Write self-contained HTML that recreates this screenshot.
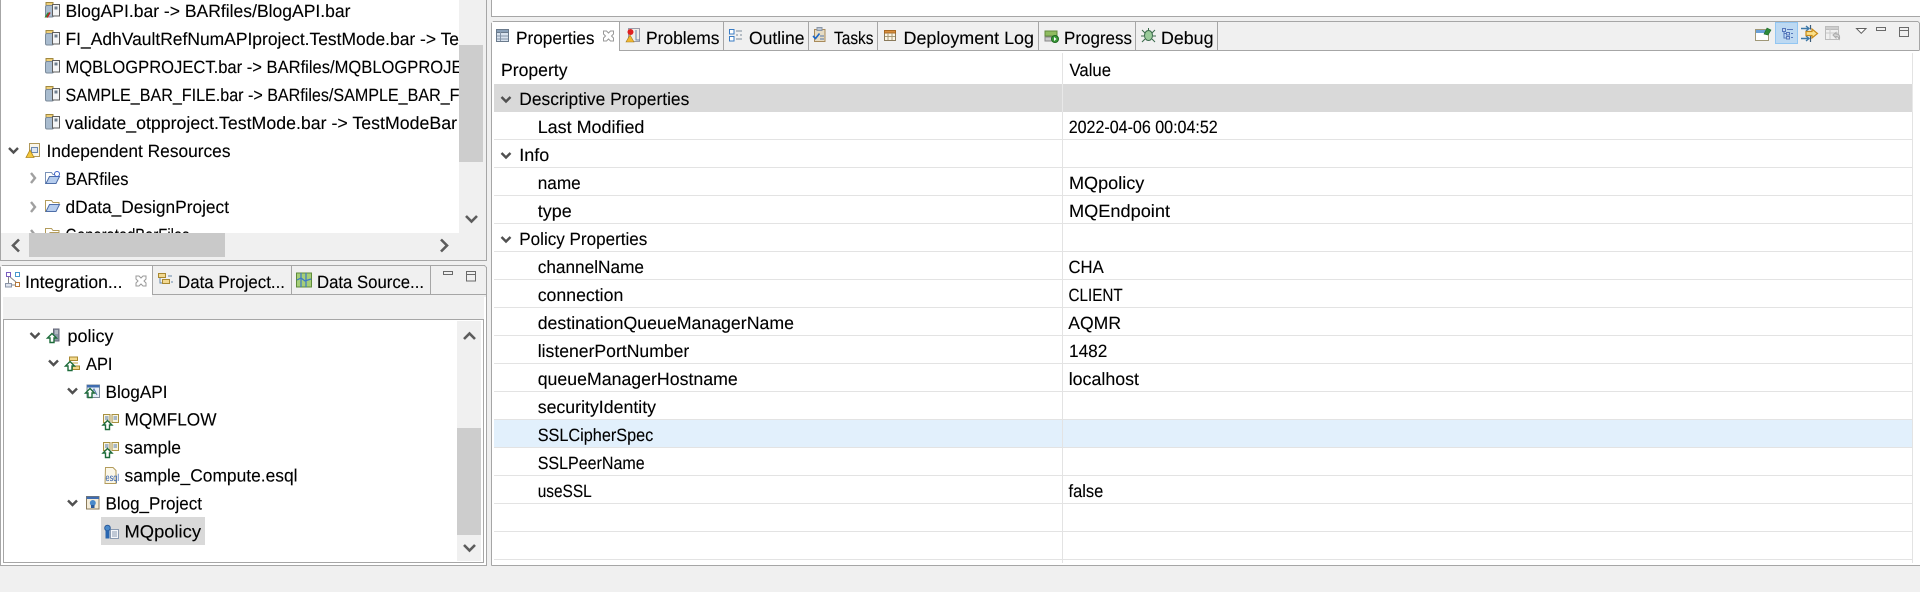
<!DOCTYPE html>
<html lang="en">
<head>
<meta charset="utf-8">
<title>Properties</title>
<style>
html,body{margin:0;padding:0;background:#f0f0f0;width:1920px;height:592px;overflow:hidden}
svg{display:block}
text{font-family:"Liberation Sans",sans-serif;font-size:17.8px;fill:#000;stroke:#000;stroke-width:.12;text-rendering:geometricPrecision}
.l{stroke:#e3e3e3;stroke-width:1;shape-rendering:crispEdges}
.b{stroke:#a6a6a6;stroke-width:1;fill:none;shape-rendering:crispEdges}
.cv{fill:none;stroke:#505050;stroke-width:2.4}
.cg{fill:none;stroke:#a0a0a0;stroke-width:2.4}
.sb{fill:none;stroke:#5c5c5c;stroke-width:2.6}
</style>
</head>
<body>
<svg width="1920" height="592" viewBox="0 0 1920 592" xmlns="http://www.w3.org/2000/svg">
<defs>
<clipPath id="c1"><rect x="0" y="0" width="459" height="233"/></clipPath>
<g id="bar">
<rect x="1" y="0.500" width="7" height="3" fill="#efcf78" stroke="#a08840"/>
<rect x="0.500" y="3.500" width="8" height="11.500" rx="1.500" fill="#a9bccf" stroke="#7a8a9a"/>
<rect x="7.500" y="2.500" width="7" height="11.500" fill="#f4f5f6" stroke="#5e5e5e"/>
<rect x="9.500" y="4.500" width="3" height="3" fill="#6f7f8f"/>
</g>
<g id="arrow">
<path d="M4.500 0.500 L9 5 L6.500 5 L6.500 9.500 L2.500 9.500 L2.500 5 L0 5 Z" fill="#fff" stroke="#1d6b3a" stroke-width="1.400"/>
</g>
<g id="msg">
<rect x="0.500" y="0.500" width="6.500" height="8" fill="#f8f4e0" stroke="#a89040"/>
<rect x="9" y="0.500" width="6.500" height="8" fill="#f8f4e0" stroke="#a89040"/>
<path d="M2 3h3.500M2 5h3.500M10.500 3h3.500M10.500 5h3.500" stroke="#5577aa" stroke-width="1"/>
<use href="#arrow" x="0" y="6"/>
</g>
<g id="close">
<path d="M1 1h3l2 2 2-2h3v3l-2 2 2 2v3h-3l-2-2-2 2h-3v-3l2-2-2-2z" fill="#fff" stroke="#9a9a9a" stroke-width="1"/>
</g>
</defs>

<rect width="1920" height="592" fill="#f0f0f0"/>

<!-- top-left panel -->
<rect x="1" y="0" width="458" height="233" fill="#fff"/>
<path class="b" d="M0.500 0V260.500H486.500V0"/>
<rect x="459" y="0" width="25" height="233" fill="#f0f0f0"/>
<rect x="459" y="45" width="24" height="117" fill="#cdcdcd"/>
<path class="sb" d="M466 216l5.500 5.500 5.500-5.500"/>
<rect x="3" y="233" width="481" height="24" fill="#f0f0f0"/>
<rect x="29" y="233" width="196" height="24" fill="#c9c9c9"/>
<path class="sb" d="M19 239.500l-6 6 6 6"/>
<path class="sb" d="M441 239.500l6 6-6 6"/>

<g clip-path="url(#c1)">
<text x="65.500" y="17" textLength="285" lengthAdjust="spacingAndGlyphs">BlogAPI.bar -&gt; BARfiles/BlogAPI.bar</text>
<text x="65.500" y="45" textLength="393.500" lengthAdjust="spacingAndGlyphs">FI_AdhVaultRefNumAPIproject.TestMode.bar -&gt; Te</text>
<text x="65.500" y="73" textLength="397" lengthAdjust="spacingAndGlyphs">MQBLOGPROJECT.bar -&gt; BARfiles/MQBLOGPROJE</text>
<text x="65.500" y="101" textLength="394" lengthAdjust="spacingAndGlyphs">SAMPLE_BAR_FILE.bar -&gt; BARfiles/SAMPLE_BAR_F</text>
<text x="65" y="129" textLength="392" lengthAdjust="spacingAndGlyphs">validate_otpproject.TestMode.bar -&gt; TestModeBar</text>
<text x="46.500" y="157" textLength="184" lengthAdjust="spacingAndGlyphs">Independent Resources</text>
<text x="65.500" y="185" textLength="63" lengthAdjust="spacingAndGlyphs">BARfiles</text>
<text x="65.500" y="213" textLength="163.500" lengthAdjust="spacingAndGlyphs">dData_DesignProject</text>
<text x="65.500" y="241" textLength="124" lengthAdjust="spacingAndGlyphs">GeneratedBarFiles</text>

<use href="#bar" x="45" y="2"/>
<path d="M44.500 17.500l3-5h3l-3 5z" fill="#2a8a3a"/><path d="M47 17.500l3-5" stroke="#c02020" stroke-width="1.500"/>
<use href="#bar" x="45" y="30"/>
<use href="#bar" x="45" y="58"/>
<use href="#bar" x="45" y="86"/>
<use href="#bar" x="45" y="114"/>

<path class="cv" d="M9 148l4.500 4.500 4.500-4.500"/>
<g>
<rect x="29.500" y="143.500" width="10" height="13" fill="#faf6ea" stroke="#b0985a"/>
<rect x="31.500" y="147.500" width="6" height="5" fill="#dde6f2" stroke="#6c88b0"/>
<path d="M30 150l4 7.500h-8z" fill="#f6c83c" stroke="#b08820" stroke-width=".8"/>
</g>
<path class="cg" d="M31 173l4 5-4 5"/>
<path class="cg" d="M31 202l4 5-4 5"/>
<path class="cg" d="M31 230l4 5-4 5"/>
<path d="M45.500 183.500V172.500h6l1.500 2h6v2h-9l-4 7z" fill="#fff" stroke="#7a92b8"/>
<path d="M46 183.500l3.500-7h10l-3.500 7z" fill="#b6cdee" stroke="#4e6ea8"/>
<circle cx="57" cy="174" r="2.500" fill="#fff" stroke="#3d62c8"/>
<path d="M45.500 211.500V200.500h6l1.500 2h6v2h-9l-4 7z" fill="#fff" stroke="#b39c5c"/>
<path d="M46 211.500l3.500-7h10l-3.500 7z" fill="#b6cdee" stroke="#4e6ea8"/>
<path d="M45.500 239.500V228.500h6l1.500 2h6v2h-9l-4 7z" fill="#fff" stroke="#b39c5c"/>
</g>

<!-- bottom-left panel -->
<path class="b" d="M0.500 268.500a3 3 0 0 1 3-3H483.500a3 3 0 0 1 3 3V565.500H0.500Z" style="fill:#f0f0f0"/>
<rect x="1" y="266" width="151" height="31" fill="#fff"/>
<rect x="1" y="297" width="2" height="268" fill="#fff"/>
<rect x="484" y="297" width="2" height="268" fill="#fff"/>
<rect x="3" y="562" width="483" height="3" fill="#fff"/>
<rect x="3.500" y="319.500" width="480" height="243" fill="#fff" stroke="#a6a6a6" shape-rendering="crispEdges"/>
<path class="b" d="M152.500 266V294.500H486M291.500 266V294M430.500 266V294"/>
<text x="25" y="288" textLength="97.500" lengthAdjust="spacingAndGlyphs">Integration...</text>
<text x="178" y="288" textLength="107" lengthAdjust="spacingAndGlyphs">Data Project...</text>
<text x="317" y="288" textLength="107" lengthAdjust="spacingAndGlyphs">Data Source...</text>
<use href="#close" x="135" y="275"/>
<!-- tab icons -->
<g>
<rect x="6.500" y="272.500" width="4" height="4" fill="#fff" stroke="#7a5cc0"/>
<rect x="15.500" y="272.500" width="4" height="4" fill="#fff" stroke="#4a98cc"/>
<rect x="5.500" y="283.500" width="6" height="3.500" fill="#dfe4ee" stroke="#8a94a8"/>
<rect x="15.500" y="282.500" width="4" height="4" fill="#fff" stroke="#b87838"/>
<path d="M8.500 277V283M12 285h3.500M10 277l6 5" stroke="#888" fill="none"/>
</g>
<g>
<rect x="158.500" y="273.500" width="7" height="4" fill="#f2d890" stroke="#a88830"/>
<rect x="162.500" y="279.500" width="7" height="4" fill="#f2d890" stroke="#a88830"/>
<path d="M168 276h4M171 282h2M160 278v5h2" stroke="#6688aa" fill="none"/>
</g>
<g>
<rect x="296.500" y="273" width="15" height="14" fill="#a6cf78" stroke="#5e8a3a"/>
<path d="M297 280l4-2 4 3 6-2M301 273v14M306 273v14" stroke="#3c78c8" stroke-width="1.200" fill="none"/>
</g>
<rect x="443.500" y="271.500" width="9" height="3" class="b" style="stroke:#6a6a6a"/>
<rect x="466.500" y="271.500" width="9" height="9.500" class="b" style="stroke:#6a6a6a"/>
<path d="M466 274.500h10" stroke="#6a6a6a" shape-rendering="crispEdges"/>

<!-- bottom-left scrollbar -->
<rect x="457" y="321" width="24" height="240" fill="#f0f0f0"/>
<rect x="457" y="428" width="24" height="107" fill="#cdcdcd"/>
<path class="sb" d="M464 339l5.500-5.500 5.500 5.500"/>
<path class="sb" d="M464 545l5.500 5.500 5.500-5.500"/>

<!-- bottom-left tree -->
<rect x="101" y="517" width="104" height="28" fill="#d9d9d9"/>
<text x="67.500" y="342" textLength="46" lengthAdjust="spacingAndGlyphs">policy</text>
<text x="86" y="370" textLength="26.500" lengthAdjust="spacingAndGlyphs">API</text>
<text x="105.500" y="398" textLength="62" lengthAdjust="spacingAndGlyphs">BlogAPI</text>
<text x="124.500" y="425.500" textLength="92" lengthAdjust="spacingAndGlyphs">MQMFLOW</text>
<text x="124.500" y="453.500" textLength="56.500" lengthAdjust="spacingAndGlyphs">sample</text>
<text x="124.500" y="481.500" textLength="173" lengthAdjust="spacingAndGlyphs">sample_Compute.esql</text>
<text x="105.500" y="509.500" textLength="96.500" lengthAdjust="spacingAndGlyphs">Blog_Project</text>
<text x="124.500" y="537.500" textLength="76.500" lengthAdjust="spacingAndGlyphs">MQpolicy</text>

<path class="cv" d="M30.500 333l4.500 4.500 4.500-4.500"/>
<path class="cv" d="M49 360.500l4.500 4.500 4.500-4.500"/>
<path class="cv" d="M68 388.500l4.500 4.500 4.500-4.500"/>
<path class="cv" d="M68 500.500l4.500 4.500 4.500-4.500"/>
<!-- policy icon -->
<rect x="53.500" y="329" width="5.500" height="12" fill="#8a96a6" stroke="#667"/>
<path d="M55 331h3M55 333h3" stroke="#ddd"/>
<use href="#arrow" x="47.500" y="333"/>
<!-- API icon -->
<rect x="69.500" y="357" width="8" height="3.500" fill="#f2d88a" stroke="#a88830"/>
<rect x="72.500" y="366" width="7" height="3.500" fill="#f2d88a" stroke="#a88830"/>
<path d="M69 363h9" stroke="#c0a040"/>
<use href="#arrow" x="65.500" y="361"/>
<!-- BlogAPI icon -->
<rect x="87" y="385" width="12.500" height="12.500" fill="#e6eef6" stroke="#7a8a9a"/>
<rect x="87" y="385" width="12.500" height="2.500" fill="#3f6cb0"/>
<path d="M91 394l3-5 3 6" stroke="#5577aa" fill="none"/>
<use href="#arrow" x="85.500" y="388"/>
<use href="#msg" x="103" y="414"/>
<use href="#msg" x="103" y="442"/>
<!-- esql icon -->
<path d="M105.500 467.500h7.500l3 3v13h-11z" fill="#fbf7e9" stroke="#b39c5c"/>
<text x="105.500" y="481" textLength="13.500" lengthAdjust="spacingAndGlyphs" style="font-size:10px;fill:#2c5aa8;stroke:none">esql</text>
<!-- Blog_Project icon -->
<rect x="86.500" y="496.500" width="12.500" height="12.500" fill="#f4ecd8" stroke="#8a7a5a"/>
<rect x="86.500" y="496.500" width="12.500" height="2.500" fill="#3f6cb0"/>
<circle cx="92.800" cy="503" r="3" fill="#4a8acb"/>
<path d="M91 505h3.500v3h-3.500z" fill="#2a5a9a"/>
<!-- MQpolicy icon -->
<rect x="110.500" y="529.500" width="8" height="9" fill="#f4f6fa" stroke="#8a9ab0"/>
<path d="M112 532h5M112 534h5M112 536h5" stroke="#8a9ab0"/>
<circle cx="107.500" cy="528" r="2.800" fill="#4a8acb" stroke="#2a5a9a"/>
<rect x="105.500" y="530.500" width="4" height="8" fill="#2a66b0"/>

<!-- top right panel -->
<rect x="492" y="0" width="1428" height="16" fill="#fff"/>
<path class="b" d="M491.500 0V16.500H1920"/>

<!-- properties panel -->
<rect x="492" y="50" width="1428" height="515" fill="#fff"/>
<path class="b" d="M491.500 565.500V24.500a3 3 0 0 1 3-3H1917a2.500 2.500 0 0 1 2.500 2.500V50"/>
<path class="b" d="M491.500 565.500H1920"/>
<rect x="492" y="22" width="128" height="29" fill="#fff"/>
<path class="b" d="M619.500 22V50.500H1919.500M723.500 22V50M808.500 22V50M877.500 22V50M1038.500 22V50M1135.500 22V50M1217.500 22V50"/>

<text x="516" y="44" textLength="78.500" lengthAdjust="spacingAndGlyphs">Properties</text>
<text x="646" y="44" textLength="73.500" lengthAdjust="spacingAndGlyphs">Problems</text>
<text x="749" y="44" textLength="55.500" lengthAdjust="spacingAndGlyphs">Outline</text>
<text x="834" y="44" textLength="39.500" lengthAdjust="spacingAndGlyphs">Tasks</text>
<text x="903.500" y="44" textLength="130.500" lengthAdjust="spacingAndGlyphs">Deployment Log</text>
<text x="1064" y="44" textLength="68" lengthAdjust="spacingAndGlyphs">Progress</text>
<text x="1161" y="44" textLength="52.500" lengthAdjust="spacingAndGlyphs">Debug</text>
<use href="#close" x="602.500" y="30" />

<!-- tab icons right -->
<g>
<rect x="496.500" y="29.500" width="12" height="12" fill="#d8e2ee" stroke="#6a7a8c"/>
<rect x="496.500" y="29.500" width="12" height="3" fill="#8aa0b8" stroke="#6a7a8c"/>
<path d="M497 36h11M497 39h11M500.500 32v9" stroke="#8494a8" fill="none"/>
</g>
<g>
<rect x="628.500" y="28.500" width="11" height="13" fill="#f0eee8" stroke="#9a9aa8"/>
<circle cx="630.500" cy="32" r="3" fill="#e02020"/>
<path d="M630 35l4 7h-8z" fill="#f2b830" stroke="#a07820" stroke-width=".6"/>
<path d="M636 30v10h4" stroke="#6a86a8" fill="none"/>
</g>
<g>
<rect x="729.500" y="29.500" width="4.500" height="4.500" fill="#fff" stroke="#3a7cc4"/>
<rect x="729.500" y="36.500" width="4.500" height="4.500" fill="#fff" stroke="#3a7cc4"/>
<path d="M736 31h6M736 35h2M740 35h2M736 39h6" stroke="#7a8a9a"/>
</g>
<g>
<rect x="814.500" y="29.500" width="10.500" height="12" fill="#e6dcc4" stroke="#a88a5a"/>
<rect x="817" y="27.500" width="5" height="3" fill="#b8c4d4" stroke="#8a96a6"/>
<path d="M813 36l2.500 2.500 4-5" stroke="#1a66c8" stroke-width="1.600" fill="none"/>
<path d="M820 36h4M820 39h4" stroke="#5577aa"/>
</g>
<g>
<rect x="884.500" y="30.500" width="11" height="10" fill="#fbf6e6" stroke="#8a7a5a"/>
<rect x="884.500" y="30.500" width="11" height="2.500" fill="#d89040" stroke="#a86820"/>
<path d="M885 36.500h10M888 33v7M892 33v7" stroke="#a89a78"/>
</g>
<g>
<rect x="1045" y="31" width="12" height="5" fill="#8fbc60" stroke="#608a3c"/>
<rect x="1045" y="37" width="7" height="4" fill="#c8c8c8" stroke="#888"/>
<circle cx="1055" cy="39" r="3.500" fill="#3a9a3a" stroke="#206a20"/>
<path d="M1054 37l2.500 2-2.500 2z" fill="#fff"/>
</g>
<g>
<ellipse cx="1148.500" cy="35.500" rx="4" ry="5" fill="#9acb9a" stroke="#3a6a4a"/>
<path d="M1142 30l3 3M1155 30l-3 3M1141 36h3M1153 36h3M1142 42l3-3M1155 42l-3-3M1148.500 28v3" stroke="#3a6a4a" fill="none"/>
</g>

<!-- toolbar -->
<g>
<rect x="1755.500" y="29.500" width="13" height="11" fill="#fff" stroke="#a09878"/>
<rect x="1756" y="30" width="12" height="3" fill="#6aa0d8"/>
<path d="M1764 34l3-6 4 2-3 5z" fill="#2e8a3a" stroke="#1c6a2a" stroke-width=".6"/>
</g>
<rect x="1775.500" y="22.500" width="22" height="21" fill="#bdd9f2" stroke="#92c6f2" shape-rendering="crispEdges"/>
<g shape-rendering="crispEdges">
<rect x="1782.500" y="28.500" width="3" height="3" fill="#c8d8f0" stroke="#5577bb"/>
<rect x="1786.500" y="32.500" width="3" height="2.500" fill="#c8d8f0" stroke="#5577bb"/>
<rect x="1786.500" y="36.500" width="3" height="2.500" fill="#c8d8f0" stroke="#5577bb"/>
<path d="M1784 31v7h3M1784 33.500h3M1787 29.500h6M1791 33.500h2M1791 37.500h2" stroke="#5577bb" fill="none"/>
</g>
<g>
<path d="M1801 28.500h7M1806 26l3 2.500-3 2.500" stroke="#3c78a8" stroke-width="1.400" fill="none"/>
<path d="M1801 38.500h7M1806 36l3 2.500-3 2.500" stroke="#3c78a8" stroke-width="1.400" fill="none"/>
<path d="M1810.500 25v4.500M1810.500 36v6" stroke="#3c5c78" stroke-width="1.200"/>
<path d="M1806 31.500h6v-2.500l5.500 4.500-5.500 4.500v-2.500h-6z" fill="#fbe08a" stroke="#c88a18" stroke-width="1.200"/>
</g>
<g opacity="0.85">
<rect x="1825.500" y="26.500" width="13" height="13" fill="#f0f0f0" stroke="#b4b4b4"/>
<rect x="1825.500" y="26.500" width="13" height="3" fill="#c8c8c8" stroke="#b4b4b4"/>
<path d="M1826 33h12M1830 29v10" stroke="#c4c4c4"/>
<path d="M1833 35l3-2.500v1.500c3 0 4 1.500 3.500 5-1-2-2-2.500-3.500-2.500v1.500z" fill="#d0d0d0" stroke="#a0a0a0"/>
</g>
<path d="M1856.500 28.500h9.500l-4.750 4.800z" fill="#fff" stroke="#606060"/>
<rect x="1876.500" y="27.500" width="9" height="3" class="b" style="stroke:#6a6a6a"/>
<rect x="1899.500" y="27.500" width="9" height="9" class="b" style="stroke:#6a6a6a"/>
<path d="M1899 30.500h10" stroke="#6a6a6a" shape-rendering="crispEdges"/>

<!-- table -->
<rect x="494" y="84" width="1418" height="28" fill="#d9d9d9"/>
<rect x="494" y="420" width="1418" height="27" fill="#e2f0fc"/>
<g class="l">
<path d="M494 139.500H1912M494 167.500H1912M494 195.500H1912M494 223.500H1912M494 251.500H1912M494 279.500H1912M494 307.500H1912M494 335.500H1912M494 363.500H1912M494 391.500H1912M494 419.500H1912M494 447.500H1912M494 475.500H1912M494 503.500H1912M494 531.500H1912M494 559.500H1912"/>
<path d="M1062.500 53V563M1912.500 53V563"/>
</g>
<path d="M1062.500 84V112M1912.500 84V112" stroke="#e8e8e8" shape-rendering="crispEdges"/>

<text x="501" y="76" textLength="66.500" lengthAdjust="spacingAndGlyphs">Property</text>
<text x="1069.500" y="76" textLength="41.500" lengthAdjust="spacingAndGlyphs">Value</text>

<path class="cv" d="M501.500 97l4.500 4.500 4.500-4.500"/>
<path class="cv" d="M501.500 153l4.500 4.500 4.500-4.500"/>
<path class="cv" d="M501.500 237l4.500 4.500 4.500-4.500"/>

<text x="519.300" y="105" textLength="170" lengthAdjust="spacingAndGlyphs">Descriptive Properties</text>
<text x="537.700" y="133" textLength="106.700" lengthAdjust="spacingAndGlyphs">Last Modified</text>
<text x="519.300" y="161" textLength="30" lengthAdjust="spacingAndGlyphs">Info</text>
<text x="537.700" y="189" textLength="43" lengthAdjust="spacingAndGlyphs">name</text>
<text x="537.700" y="217" textLength="34" lengthAdjust="spacingAndGlyphs">type</text>
<text x="519.300" y="245" textLength="128" lengthAdjust="spacingAndGlyphs">Policy Properties</text>
<text x="537.700" y="273" textLength="106.300" lengthAdjust="spacingAndGlyphs">channelName</text>
<text x="537.700" y="301" textLength="85.600" lengthAdjust="spacingAndGlyphs">connection</text>
<text x="537.700" y="329" textLength="256.300" lengthAdjust="spacingAndGlyphs">destinationQueueManagerName</text>
<text x="537.700" y="357" textLength="151.600" lengthAdjust="spacingAndGlyphs">listenerPortNumber</text>
<text x="537.700" y="385" textLength="200" lengthAdjust="spacingAndGlyphs">queueManagerHostname</text>
<text x="537.700" y="413" textLength="118.300" lengthAdjust="spacingAndGlyphs">securityIdentity</text>
<text x="537.700" y="441" textLength="115.600" lengthAdjust="spacingAndGlyphs">SSLCipherSpec</text>
<text x="537.700" y="469" textLength="107" lengthAdjust="spacingAndGlyphs">SSLPeerName</text>
<text x="537.700" y="497" textLength="54" lengthAdjust="spacingAndGlyphs">useSSL</text>

<text x="1068.700" y="133" textLength="149" lengthAdjust="spacingAndGlyphs">2022-04-06 00:04:52</text>
<text x="1069" y="189" textLength="75.300" lengthAdjust="spacingAndGlyphs">MQpolicy</text>
<text x="1069" y="217" textLength="101" lengthAdjust="spacingAndGlyphs">MQEndpoint</text>
<text x="1068.500" y="273" textLength="35.200" lengthAdjust="spacingAndGlyphs">CHA</text>
<text x="1068.500" y="301" textLength="54.200" lengthAdjust="spacingAndGlyphs">CLIENT</text>
<text x="1068.300" y="329" textLength="52.700" lengthAdjust="spacingAndGlyphs">AQMR</text>
<text x="1069" y="357" textLength="38.300" lengthAdjust="spacingAndGlyphs">1482</text>
<text x="1068.700" y="385" textLength="70.300" lengthAdjust="spacingAndGlyphs">localhost</text>
<text x="1068.500" y="497" textLength="34.800" lengthAdjust="spacingAndGlyphs">false</text>
</svg>
<script>
document.querySelectorAll('text').forEach(function(t){
  var L=parseFloat(t.getAttribute('textLength'));
  var x=t.getAttribute('x'),y=t.getAttribute('y');
  t.removeAttribute('textLength');t.removeAttribute('lengthAdjust');
  var w=t.getComputedTextLength();
  if(!w)return;
  t.setAttribute('x',0);t.setAttribute('y',0);
  t.setAttribute('transform','translate('+x+' '+y+') scale('+(L/w)+' 1)');
});
</script>
</body>
</html>
